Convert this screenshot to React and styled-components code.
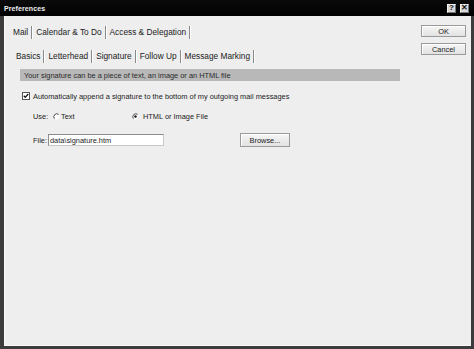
import React from "react";
import styled, { createGlobalStyle } from "styled-components";

const Global = createGlobalStyle`
  html, body { margin: 0; padding: 0; background: #2e2e2e; }
  body { font-family: "Liberation Sans", Arial, sans-serif; }
`;

const Window = styled.div`
  width: 474px;
  height: 349px;
  display: flex;
  flex-direction: column;
  background: #3a3a3a;
  box-sizing: border-box;
`;

const TitleBar = styled.div`
  height: 16px;
  flex: none;
  background: linear-gradient(#0a0a0a, #000);
  display: flex;
  align-items: center;
  padding: 0 5px 0 4px;
  gap: 4px;
`;

const Title = styled.div`
  flex: 1;
  color: #f2f2f2;
  font-size: 7px;
  font-weight: bold;
  letter-spacing: 0.1px;
`;

const CapButton = styled.div`
  width: 9px;
  height: 9px;
  background: #d8d8d8;
  border: 1px solid #f4f4f4;
  border-right-color: #777;
  border-bottom-color: #777;
  display: flex;
  align-items: center;
  justify-content: center;
  box-sizing: border-box;
  color: #111;
  font-size: 8px;
  font-weight: bold;
  line-height: 1;
`;

const Frame = styled.div`
  flex: 1;
  display: flex;
  padding: 0 3px 3px 4px;
  background: #3c3c3c;
`;

const Body = styled.div`
  flex: 1;
  display: flex;
  background: #eeeeee;
  border-left: 1px solid #fafafa;
  border-bottom: 1px solid #fafafa;
  padding: 9px 5px 0 8px;
  gap: 10px;
`;

const Main = styled.div`
  flex: 1;
  display: flex;
  flex-direction: column;
`;

const TabRow = styled.div`
  display: flex;
  align-items: center;
  height: 14px;
  padding-left: ${(p) => p.$indent}px;
  margin-bottom: ${(p) => p.$gap}px;
  font-size: ${(p) => p.$size}px;
  color: #222;
`;

const Tab = styled.span`
  padding: 0 3px 0 ${(p) => (p.$first ? 0 : 3)}px;
  white-space: nowrap;
`;

const Sep = styled.span`
  width: 1px;
  height: 13px;
  background: #8a8a8a;
  border-right: 1px solid #ffffff;
`;

const Panel = styled.div`
  display: flex;
  flex-direction: column;
  padding-left: 7px;
  font-size: 7.4px;
  color: #222;
`;

const Banner = styled.div`
  width: 380px;
  height: 12px;
  background: #b8b8b8;
  display: flex;
  align-items: center;
  padding-left: 4px;
  box-sizing: border-box;
  color: #2a2a2a;
  margin-bottom: 9px;
`;

const Row = styled.div`
  display: flex;
  align-items: center;
  height: ${(p) => p.$h || 12}px;
  padding-left: ${(p) => p.$indent || 0}px;
  margin-bottom: ${(p) => p.$mb || 0}px;
  gap: ${(p) => (p.$gap !== undefined ? p.$gap : 3)}px;
`;

const Label = styled.span`
  white-space: nowrap;
  width: ${(p) => (p.$w ? p.$w + "px" : "auto")};
`;

const Group = styled.span`
  display: flex;
  align-items: center;
  gap: ${(p) => p.$gap}px;
  width: ${(p) => (p.$w ? p.$w + "px" : "auto")};
`;

const Input = styled.div`
  width: 116px;
  height: 12px;
  box-sizing: border-box;
  background: #fff;
  border: 1px solid #8c8c8c;
  border-right-color: #c8c8c8;
  border-bottom-color: #c8c8c8;
  display: flex;
  align-items: center;
  padding-left: 1px;
  font-size: 7.4px;
  color: #222;
`;

const Button = styled.div`
  width: ${(p) => p.$w}px;
  height: ${(p) => p.$h}px;
  box-sizing: border-box;
  background: linear-gradient(#f6f6f6, #e2e2e2);
  border: 1px solid #9a9a9a;
  box-shadow: inset 1px 1px 0 #fff;
  display: flex;
  align-items: center;
  justify-content: center;
  font-size: 7.4px;
  color: #222;
  margin-left: ${(p) => p.$ml || 0}px;
`;

const ButtonCol = styled.div`
  display: flex;
  flex-direction: column;
  gap: 6px;
`;

const Check = () => (
  <svg width="8" height="8" viewBox="0 0 8 8">
    <rect x="0.5" y="0.5" width="7" height="7" fill="#fff" stroke="#555" />
    <path d="M1.8 3.8 L3.3 5.4 L6.2 2" fill="none" stroke="#111" strokeWidth="1.3" />
  </svg>
);

const Radio = ({ on }) => (
  <svg width="7" height="7" viewBox="0 0 7 7">
    <circle cx="3.5" cy="3.5" r="3" fill="#fff" />
    <path d="M5.6 1.4 A3 3 0 0 0 1.4 5.6" fill="none" stroke="#444" strokeWidth="1" />
    {on && <circle cx="3.5" cy="3.5" r="1.2" fill="#111" />}
  </svg>
);

const mainTabs = ["Mail", "Calendar & To Do", "Access & Delegation"];
const subTabs = ["Basics", "Letterhead", "Signature", "Follow Up", "Message Marking"];

export default function App() {
  return (
    <>
      <Global />
      <Window>
        <TitleBar>
          <Title>Preferences</Title>
          <CapButton>?</CapButton>
          <CapButton>✕</CapButton>
        </TitleBar>
        <Frame>
          <Body>
            <Main>
              <TabRow $indent={0} $gap={10} $size={8.3}>
                {mainTabs.map((t, i) => (
                  <React.Fragment key={t}>
                    <Tab $first={i === 0}>{t}</Tab>
                    <Sep />
                  </React.Fragment>
                ))}
              </TabRow>
              <TabRow $indent={3} $gap={6} $size={8.3}>
                {subTabs.map((t, i) => (
                  <React.Fragment key={t}>
                    <Tab $first={i === 0}>{t}</Tab>
                    <Sep />
                  </React.Fragment>
                ))}
              </TabRow>
              <Panel>
                <Banner>Your signature can be a piece of text, an image or an HTML file</Banner>
                <Row $indent={2} $mb={8}>
                  <Check />
                  <Label>Automatically append a signature to the bottom of my outgoing mail messages</Label>
                </Row>
                <Row $indent={13} $mb={11}>
                  <Label $w={17}>Use:</Label>
                  <Group $w={76} $gap={1}>
                    <Radio />
                    <Label>Text</Label>
                  </Group>
                  <Group $gap={4}>
                    <Radio on />
                    <Label>HTML or Image File</Label>
                  </Group>
                </Row>
                <Row $indent={13} $h={14} $gap={1}>
                  <Label>File:</Label>
                  <Input>data\signature.htm</Input>
                  <Button $w={50} $h={14} $ml={75}>Browse...</Button>
                </Row>
              </Panel>
            </Main>
            <ButtonCol>
              <Button $w={45} $h={12}>OK</Button>
              <Button $w={45} $h={12}>Cancel</Button>
            </ButtonCol>
          </Body>
        </Frame>
      </Window>
    </>
  );
}
